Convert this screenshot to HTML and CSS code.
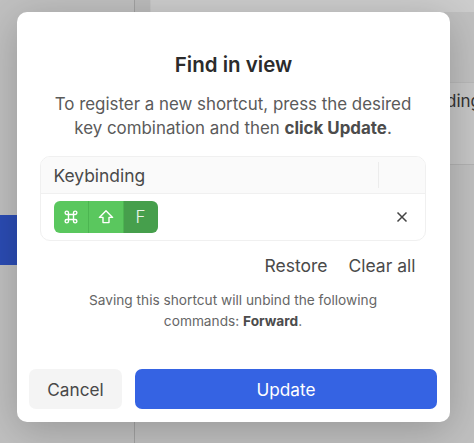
FILE: index.html
```html
<!DOCTYPE html>
<html lang="en">
<head>
    <meta charset="UTF-8">
    <meta name="viewport" content="width=device-width, initial-scale=1.0">
    <title>Find in view</title>
    <link rel="stylesheet" href="styles.css">
</head>
<body>
    <!-- Page behind the dialog -->
    <div class="backdrop">
        <div class="back-line"></div>
        <div class="back-rail"></div>
        <div class="back-main"></div>
        <div class="back-row">ding</div>
        <div class="back-active"></div>
    </div>

    <!-- Dialog -->
    <div class="dialog">
        <h1>Find in view</h1>
        <p class="intro">To register a new shortcut, press the desired key combination and then <b>click Update</b>.</p>

        <div class="bindings">
            <div class="bindings-head">
                <span class="bindings-title">Keybinding</span>
                <span class="bindings-divider"></span>
            </div>
            <div class="bindings-row">
                <div class="keys">
                    <span class="key">
                        <svg width="16" height="16" viewBox="0 0 16 16" fill="none" stroke="#fff" stroke-width="1.4">
                            <path d="M5.5 5.5h5v5h-5z M5.5 5.5V3.8a1.7 1.7 0 1 0-1.7 1.7h1.7 M10.5 5.5V3.8a1.7 1.7 0 1 1 1.7 1.7h-1.7 M5.5 10.5v1.7a1.7 1.7 0 1 1-1.7-1.7h1.7 M10.5 10.5v1.7a1.7 1.7 0 1 0 1.7-1.7h-1.7"/>
                        </svg>
                    </span>
                    <span class="key">
                        <svg width="16" height="16" viewBox="0 0 16 16" fill="none" stroke="#fff" stroke-width="1.4" stroke-linejoin="round">
                            <path d="M8 1.8 14.6 8.4H11v5.2H5V8.4H1.4z"/>
                        </svg>
                    </span>
                    <span class="key key-last">F</span>
                </div>
                <svg class="remove" width="12" height="12" viewBox="0 0 12 12" fill="none" stroke="#444" stroke-width="1.5">
                    <path d="M1.5 1.5l9 9M10.5 1.5l-9 9"/>
                </svg>
            </div>
        </div>

        <div class="links">
            <span>Restore</span>
            <span>Clear all</span>
        </div>

        <p class="warning">Saving this shortcut will unbind the following commands: <b>Forward</b>.</p>

        <div class="actions">
            <div class="btn btn-cancel">Cancel</div>
            <div class="btn btn-update">Update</div>
        </div>
    </div>
</body>
</html>
```

FILE: styles.css
```css
/* General Reset */
* {
    margin: 0;
    padding: 0;
    box-sizing: border-box;
}

body {
    width: 474px;
    height: 443px;
    overflow: hidden;
    position: relative;
    font-family: 'Inter', 'Liberation Sans', sans-serif;
    background: #c0c0c0;
}

/* Page behind the dialog */
.backdrop {
    position: absolute;
    inset: 0;
}

.back-line {
    position: absolute;
    left: 134px;
    top: 0;
    bottom: 0;
    width: 1px;
    background: #a2a2a2;
}

.back-rail {
    position: absolute;
    left: 135px;
    top: 0;
    width: 16px;
    height: 12px;
    background: #bcbcbc;
    border-right: 1px solid #c6c6c6;
}

.back-main {
    position: absolute;
    left: 151px;
    top: 0;
    right: 0;
    height: 12px;
    background: #cdcdcd;
}

.back-row {
    position: absolute;
    left: 440px;
    top: 82px;
    right: 0;
    height: 83px;
    padding: 8px 0 0 6px;
    font-size: 17px;
    color: #333;
    white-space: nowrap;
    overflow: hidden;
    background: #c6c6c6;
    border-top: 1px solid #b8b8b8;
    border-bottom: 1px solid #b2b2b2;
}

.back-active {
    position: absolute;
    left: 0;
    top: 215px;
    width: 17px;
    height: 50px;
    background: #2b4cb4;
}

/* Dialog */
.dialog {
    position: absolute;
    left: 17px;
    top: 12px;
    width: 433px;
    height: 410px;
    padding: 40px 12px 0;
    background: #fff;
    border-radius: 10px;
    box-shadow: 0 8px 40px rgba(0, 0, 0, 0.22);
    display: flex;
    flex-direction: column;
    align-items: center;
    color: #444;
}

h1 {
    font-size: 20.5px;
    line-height: 25px;
    font-weight: 600;
    color: #2b2b2b;
}

.intro {
    margin-top: 15px;
    margin-left: -1px;
    width: 370px;
    font-size: 16.9px;
    line-height: 24px;
    text-align: center;
    color: #5a5a5a;
}

.intro b,
.warning b {
    font-weight: 700;
    color: #4c4c4c;
}

/* Keybinding table */
.bindings {
    margin-top: 16px;
    margin-left: -2px;
    width: 386px;
    height: 85px;
    border: 1px solid #f0f0f0;
    border-radius: 10px;
    overflow: hidden;
    flex-shrink: 0;
}

.bindings-head {
    height: 37px;
    display: flex;
    align-items: center;
    justify-content: space-between;
    padding: 0 46px 0 13px;
    background: #fafafa;
    border-bottom: 1px solid #f0f0f0;
}

.bindings-title {
    font-size: 17.4px;
    color: #4a4a4a;
}

.bindings-divider {
    width: 1px;
    height: 26px;
    background: #ececec;
}

.bindings-row {
    height: 46px;
    display: flex;
    align-items: center;
    justify-content: space-between;
    padding: 0 17px 0 13px;
}

.keys {
    display: flex;
    height: 32px;
    border-radius: 6px;
    overflow: hidden;
}

.key {
    width: 35px;
    display: flex;
    align-items: center;
    justify-content: center;
    background: #5ac75e;
    border-right: 1px solid #4cb551;
    color: #fff;
    font-size: 17px;
}

.key-last {
    width: 34px;
    border-right: 0;
    background: #469f4c;
    color: #e8f4e8;
    font-weight: 300;
}

/* Restore / Clear all */
.links {
    margin-top: 14px;
    width: 386px;
    padding-right: 11px;
    display: flex;
    justify-content: flex-end;
    gap: 21px;
    font-size: 17.5px;
    line-height: 22px;
    color: #4a4a4a;
}

.warning {
    margin-top: 13px;
    margin-left: -1px;
    width: 310px;
    font-size: 13.7px;
    line-height: 21px;
    text-align: center;
    color: #666;
}

/* Footer buttons */
.actions {
    position: absolute;
    left: 12px;
    right: 13px;
    bottom: 13px;
    display: flex;
    gap: 13px;
}

.btn {
    height: 40px;
    border-radius: 7px;
    display: flex;
    align-items: center;
    justify-content: center;
    font-size: 17.2px;
}

.btn-cancel {
    width: 93px;
    background: #f4f4f4;
    color: #484848;
}

.btn-update {
    flex: 1;
    background: #3563e3;
    color: #fff;
}
```
